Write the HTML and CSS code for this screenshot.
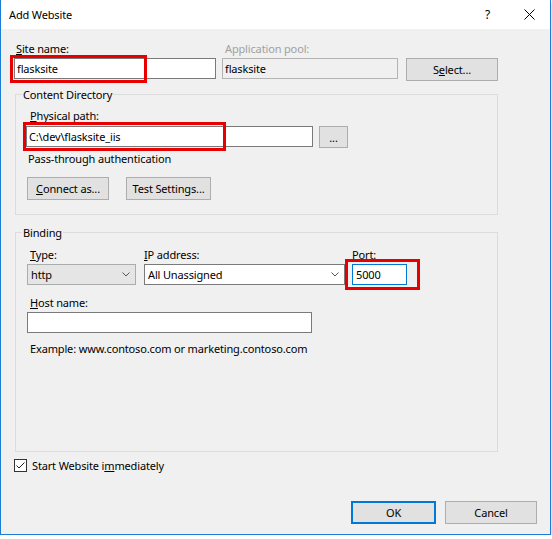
FILE: index.html
```html
<!DOCTYPE html>
<html>
<head>
<meta charset="utf-8">
<link rel="stylesheet" href="styles.css">
</head>
<body>
<div class="window">
  <div class="titlebar">
    <span class="title">Add Website</span>
    <span class="help">?</span>
    <svg class="close" width="11" height="11" viewBox="0 0 11 11"><path d="M0.5 0.5 L10.5 10.5 M10.5 0.5 L0.5 10.5" stroke="#000" stroke-width="1" fill="none"/></svg>
  </div>
  <div class="body">
    <div class="row-site">
      <div class="field f-site">
        <div class="label lb-site"><u>S</u>ite name:</div>
        <div class="input">flasksite</div>
      </div>
      <div class="field f-pool">
        <div class="label lb-pool disabled">Application pool:</div>
        <div class="input readonly">flasksite</div>
      </div>
      <div class="btn b-select">S<u>e</u>lect...</div>
    </div>

    <fieldset class="group g-content">
      <legend>Content Directory</legend>
      <div class="inner-content">
        <div class="label lb-path"><u>P</u>hysical path:</div>
        <div class="path-row">
          <div class="input i-path">C:\dev\flasksite_iis</div>
          <div class="btn b-dots">...</div>
        </div>
        <div class="auth">Pass-through authentication</div>
        <div class="btn-row">
          <div class="btn b-connect"><u>C</u>onnect as...</div>
          <div class="btn b-test">Test Settin<u>g</u>s...</div>
        </div>
      </div>
    </fieldset>

    <fieldset class="group g-binding">
      <legend>Binding</legend>
      <div class="inner-binding">
        <div class="bind-row">
          <div class="field f-type">
            <div class="label lb-type"><u>T</u>ype:</div>
            <div class="combo c-type"><span>http</span><svg width="8" height="5" viewBox="0 0 8 5"><path d="M0.5 0.5 L4 4 L7.5 0.5" stroke="#555" stroke-width="1" fill="none"/></svg></div>
          </div>
          <div class="field f-ip">
            <div class="label"><u>I</u>P address:</div>
            <div class="combo c-ip"><span>All Unassigned</span><svg width="8" height="5" viewBox="0 0 8 5"><path d="M0.5 0.5 L4 4 L7.5 0.5" stroke="#555" stroke-width="1" fill="none"/></svg></div>
          </div>
          <div class="field f-port">
            <div class="label">Po<u>r</u>t:</div>
            <div class="input i-port">5000</div>
          </div>
        </div>
        <div class="label lb-host"><u>H</u>ost name:</div>
        <div class="input i-host"></div>
        <div class="example">Example: www.contoso.com or marketing.contoso.com</div>
      </div>
    </fieldset>

    <div class="check-row">
      <svg class="checkbox" width="13" height="13" viewBox="0 0 13 13"><rect x="0.5" y="0.5" width="12" height="12" fill="#fff" stroke="#333"/><path d="M2.5 6.5 L5 9 L10.5 3.5" stroke="#222" stroke-width="1" fill="none"/></svg>
      <span>Start Website i<u>m</u>mediately</span>
    </div>

    <div class="footer">
      <div class="btn b-ok">OK</div>
      <div class="btn b-cancel">Cancel</div>
    </div>
  </div>

  <div class="mark m-site"></div>
  <div class="mark m-path"></div>
  <div class="mark m-port"></div>
</div>
</body>
</html>
```

FILE: styles.css
```css
* { box-sizing: border-box; }

body {
  margin: 0;
  background: #fff;
  font-family: "Noto Sans", sans-serif;
  font-size: 11px;
  letter-spacing: -0.15px;
  color: #000;
}

u { text-decoration: underline; text-underline-offset: 1px; }

.window {
  position: relative;
  width: 551px;
  height: 535px;
  border: 1px solid #1c7dd6;
  border-top: 0;
  background: #f0f0f0;
  box-shadow: 0 2px 4px rgba(0, 0, 0, 0.28);
  display: flex;
  flex-direction: column;
}

.titlebar {
  height: 29px;
  background: #fff;
  display: flex;
  align-items: center;
  padding-left: 8px;
  padding-right: 15px;
}
.title { flex: 1; }
.help { font-size: 12px; margin-right: 34px; }
.close { display: block; }

.body {
  flex: 1;
  padding: 12px 13px 0 13px;
  display: flex;
  flex-direction: column;
}

.label { line-height: 15px; height: 15px; white-space: nowrap; }
.disabled { color: #a0a0a0; }

.field { display: flex; flex-direction: column; }
.field .label { margin-bottom: 2px; }

.input {
  height: 21px;
  background: #fff;
  border: 1px solid #7a7a7a;
  line-height: 19px;
  padding-left: 2px;
  white-space: nowrap;
}
.readonly { background: #f0f0f0; border-color: #b4b4b4; }

.btn {
  height: 23px;
  background: #e1e1e1;
  border: 1px solid #adadad;
  display: flex;
  align-items: center;
  justify-content: center;
  white-space: nowrap;
}

/* site row */
.row-site { display: flex; align-items: flex-start; }
.f-site { width: 202px; }
.lb-site { padding-left: 2px; }
.f-pool { width: 176px; margin-left: 6px; }
.lb-pool { padding-left: 3px; }
.b-select { width: 92px; margin-left: 8px; margin-top: 17px; }

/* group boxes */
.group {
  margin: 0;
  padding: 0;
  border: 1px solid #dcdcdc;
  min-width: 0;
  margin-left: 1px;
  width: 483px;
}
.group legend {
  padding: 0 1px;
  margin-left: 6px;
  line-height: 15px;
}
.g-content { margin-top: 6px; }
.inner-content { padding: 6px 0 14px 10px; }
.lb-path { padding-left: 4px; margin-bottom: 3px; }
.path-row { display: flex; align-items: flex-start; }
.i-path { width: 287px; }
.b-dots { width: 29px; height: 22px; margin-left: 6px; }
.auth { line-height: 15px; margin-top: 3px; padding-left: 2px; }
.btn-row { display: flex; margin-top: 11px; }
.b-connect { width: 82px; margin-left: 1px; }
.b-test { width: 85px; margin-left: 17px; }

.g-binding { margin-top: 10px; }
.inner-binding { padding: 7px 0 95px 11px; }
.bind-row { display: flex; }
.f-type { width: 109px; }
.lb-type { padding-left: 3px; }
.f-ip { width: 201px; margin-left: 8px; }
.f-port { width: 55px; margin-left: 7px; }
.combo {
  height: 21px;
  display: flex;
  align-items: center;
  justify-content: space-between;
  padding: 0 5px 0 3px;
  border: 1px solid #7a7a7a;
  background: #fff;
}
.c-type { background: #e5e5e5; border-color: #acacac; }
.combo svg { display: block; }
.i-port { border-color: #0078d7; padding-left: 3px; }
.lb-host { margin-top: 10px; margin-bottom: 2px; padding-left: 3px; }
.i-host { width: 285px; }
.example { line-height: 15px; margin-top: 8px; padding-left: 3px; }

.check-row {
  display: flex;
  align-items: center;
  height: 15px;
  margin-top: 6px;
  line-height: 15px;
}
.checkbox { display: block; margin-right: 5px; }

.footer {
  display: flex;
  justify-content: flex-end;
  margin-top: 28px;
}
.b-ok { width: 85px; border: 2px solid #0078d7; }
.b-cancel { width: 92px; margin-left: 9px; }

/* red annotation boxes drawn over the dialog */
.mark {
  position: absolute;
  border: 3px solid #e80000;
}
.m-site { left: 9px; top: 55px; width: 137px; height: 28px; }
.m-path { left: 22px; top: 122px; width: 203px; height: 29px; }
.m-port { left: 344px; top: 259px; width: 75px; height: 31px; }
```
